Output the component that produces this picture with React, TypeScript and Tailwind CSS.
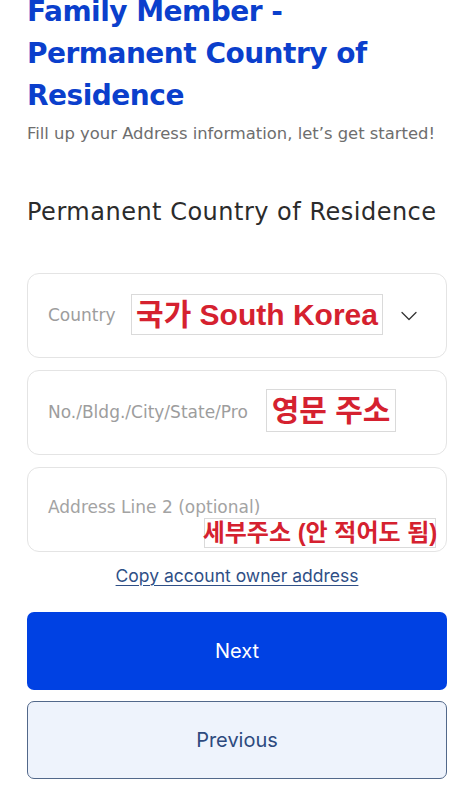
import { ChevronDown } from "lucide-react";

const sans = "font-['DejaVu_Sans','Noto_Sans_CJK_KR',sans-serif]";
const ui = "font-['Inter','Noto_Sans_CJK_KR',sans-serif]";
const note = "font-['Liberation_Sans','Noto_Sans_CJK_KR',sans-serif] font-bold text-[#d5212f] bg-white border border-[#dadada] leading-none whitespace-nowrap";

export default function App() {
  return (
    <div className={`min-h-screen bg-white ${sans} overflow-hidden`}>
      <div className="px-[27px] -mt-[9px]">
        {/* Title */}
        <h1 className="text-[28px] leading-[42px] font-bold text-[#0b3fcc] tracking-[-0.5px]">
          Family Member -<br />
          Permanent Country of<br />
          Residence
        </h1>
        <p className="mt-[6px] text-[16.4px] leading-[22px] text-[#6e6e6e] whitespace-nowrap">
          Fill up your Address information, let’s get started!
        </p>

        {/* Section */}
        <h2 className="mt-[52px] text-[24px] leading-[30px] text-[#2b2b2b] tracking-[0.5px] whitespace-nowrap">
          Permanent Country of Residence
        </h2>

        <div className="mt-[46px] flex flex-col gap-[12px]">
          {/* Country */}
          <div className="relative h-[85px] rounded-[12px] border border-[#e4e4e4] flex items-center pl-[20px] pr-[23px]">
            <span className="text-[17px] text-[#9d9d9d]">Country</span>
            <span className="flex-1" />
            <ChevronDown className="w-[28px] h-[28px] text-[#333]" strokeWidth={1.1} />
            <div className={`absolute left-[103px] top-[20px] h-[41px] w-[252px] flex items-center justify-center text-[30px] ${note}`}>
              국가 South Korea
            </div>
          </div>

          {/* Address line 1 */}
          <div className="relative h-[85px] rounded-[12px] border border-[#e4e4e4] flex items-center pl-[20px]">
            <span className="text-[17px] text-[#9d9d9d] whitespace-nowrap">No./Bldg./City/State/Pro</span>
            <div className={`absolute left-[238px] top-[18px] h-[43px] w-[130px] flex items-center justify-center text-[30px] ${note}`}>
              영문 주소
            </div>
          </div>

          {/* Address line 2 */}
          <div className="relative h-[85px] rounded-[12px] border border-[#e4e4e4] flex items-center pl-[20px]">
            <span className="text-[17px] text-[#a3a3a3] -mt-[4px]">Address Line 2 (optional)</span>
            <div className={`absolute left-[176px] top-[50px] h-[30px] w-[232px] flex items-center justify-center text-[24px] ${note}`}>
              세부주소 (안 적어도 됨)
            </div>
          </div>
        </div>

        <div className={`mt-[12px] text-center leading-[24px] ${ui}`}>
          <a href="#" className="text-[17.5px] text-[#2f4f86] underline underline-offset-[3px] decoration-1">
            Copy account owner address
          </a>
        </div>

        <div className={`mt-[24px] flex flex-col gap-[11px] ${ui}`}>
          <button className="h-[78px] rounded-[7px] bg-[#0041e3] text-white text-[20px]">Next</button>
          <button className="h-[78px] rounded-[7px] bg-[#eef3fc] border-[1.5px] border-[#52688a] text-[#2d4a7e] text-[20px]">
            Previous
          </button>
        </div>
      </div>
    </div>
  );
}
